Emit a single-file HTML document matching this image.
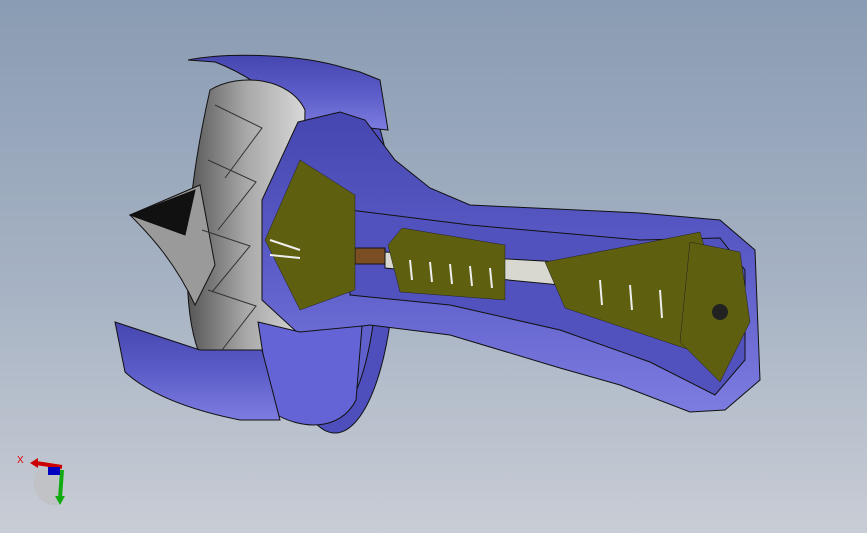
<!DOCTYPE html>
<html><head><meta charset="utf-8"><style>
html,body{margin:0;padding:0}
body{width:867px;height:533px;overflow:hidden;background:linear-gradient(#8a9cb3,#a7b3c4 55%,#c9cdd5);font-family:"Liberation Sans",sans-serif}
svg{position:absolute;left:0;top:0}
</style></head><body>
<svg width="867" height="533" viewBox="0 0 867 533">
<defs>
<linearGradient id="pu" x1="0" y1="0" x2="0" y2="1"><stop offset="0" stop-color="#4646b0"/><stop offset="0.5" stop-color="#5c5cc8"/><stop offset="1" stop-color="#7c7ce0"/></linearGradient>
<linearGradient id="gr" x1="0" y1="0" x2="1" y2="0"><stop offset="0" stop-color="#555"/><stop offset="0.5" stop-color="#a8a8a8"/><stop offset="1" stop-color="#d8d8d8"/></linearGradient>
</defs>
<g stroke="#111" stroke-width="1">
<!-- big ring -->
<ellipse cx="335" cy="250" rx="60" ry="183" fill="#4e4ebc"/>
<ellipse cx="330" cy="250" rx="48" ry="168" fill="#6060cc"/>
<!-- upper cowl -->
<path d="M188,60 C230,52 300,54 345,68 L360,72 L380,80 L388,130 L300,120 C280,100 250,75 215,62 Z" fill="url(#pu)"/>
<!-- fan -->
<path d="M210,90 C240,72 290,78 305,110 L300,360 C270,360 230,365 198,350 C180,300 185,200 210,90 Z" fill="url(#gr)"/>
<path d="M130,215 L200,185 L215,265 L195,305 C175,262 150,235 130,215 Z" fill="#9a9a9a"/>
<path d="M130,215 L195,190 L185,235 Z" fill="#111"/>
<g fill="none" stroke="#333"><path d="M215,105 L262,128 L225,178"/><path d="M208,160 L256,182 L218,230"/><path d="M202,230 L250,246 L212,292"/><path d="M208,290 L256,306 L222,350"/></g>
<!-- core casing -->
<path d="M298,122 L340,112 L365,120 L395,160 L430,188 L470,205 L640,213 L720,220 L755,250 L760,380 L725,410 L690,412 L620,385 L560,368 L450,335 L370,325 L300,335 L262,300 L262,200 Z" fill="url(#pu)"/>
<!-- inner cutaway -->
<path d="M350,210 L470,225 L640,240 L720,238 L745,270 L745,360 L715,395 L650,362 L560,330 L450,305 L350,295 Z" fill="#5252be"/>
<!-- lower ring front -->
<path d="M258,322 L300,332 L362,326 L356,400 C340,432 300,430 272,412 Z" fill="#6464d6"/>
<!-- lower cowl -->
<path d="M115,322 L200,350 L262,350 L280,420 L240,420 C190,410 150,395 125,372 Z" fill="url(#pu)"/>
<!-- shaft -->
<rect x="355" y="248" width="30" height="16" fill="#7a4e22"/>
<path d="M385,252 L560,262 L560,285 L385,268 Z" fill="#d8d8d0"/>
</g>
<!-- olive blades -->
<g fill="#5f5f10" stroke="#222" stroke-width="0.5">
<path d="M265,240 L300,160 L355,195 L355,290 L300,310 Z"/>
<path d="M388,245 L402,228 L505,245 L505,300 L400,292 Z"/>
<path d="M545,262 L650,242 L700,232 L720,300 L690,350 L565,308 Z"/>
<path d="M690,242 L740,252 L750,322 L720,382 L680,342 Z"/>
</g>
<g stroke="#eee" stroke-width="2">
<line x1="270" y1="240" x2="300" y2="250"/><line x1="270" y1="255" x2="300" y2="258"/>
<line x1="410" y1="260" x2="412" y2="280"/><line x1="430" y1="262" x2="432" y2="282"/><line x1="450" y1="264" x2="452" y2="284"/><line x1="470" y1="266" x2="472" y2="286"/><line x1="490" y1="268" x2="492" y2="288"/>
<line x1="600" y1="280" x2="602" y2="305"/><line x1="630" y1="285" x2="632" y2="310"/><line x1="660" y1="290" x2="662" y2="318"/>
</g>
<circle cx="720" cy="312" r="8" fill="#222"/>
<!-- triad -->
<path d="M38,470 A22,22 0 0 0 58,505 L58,470 Z" fill="#c0c2c6"/>
<line x1="62" y1="467" x2="36" y2="463" stroke="#c00" stroke-width="4"/>
<path d="M30,463 L38,458 L38,468 Z" fill="#c00"/>
<line x1="62" y1="470" x2="60" y2="498" stroke="#1a1" stroke-width="4"/>
<path d="M55,496 L65,496 L60,505 Z" fill="#1a1"/>
<rect x="48" y="467" width="12" height="8" fill="#0000c0"/>
<text x="17" y="463" font-size="10" fill="#d00">X</text>
</svg>
</body></html>
